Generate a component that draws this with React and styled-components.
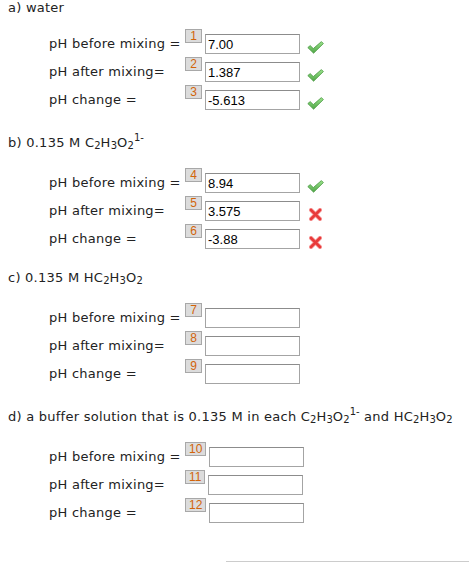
import React from 'react'
import styled, { createGlobalStyle } from 'styled-components'

const GlobalStyle = createGlobalStyle`
    html, body {
        margin: 0;
        padding: 0;
        background: #fff;
    }
    body {
        font-family: 'DejaVu Sans', Verdana, sans-serif;
        font-size: 13px;
        letter-spacing: 0.25px;
        color: #222;
    }
`

const Page = styled.div`
    display: flex;
    flex-direction: column;
    gap: 21px;
    width: 469px;
    height: 562px;
    overflow: hidden;
    padding-left: 8px;
    box-sizing: border-box;
`

const Section = styled.section`
    display: flex;
    flex-direction: column;
    gap: 18px;
`

const Heading = styled.div`
    line-height: 16px;
    white-space: nowrap;
`

const Sub = styled.span`
    font-size: 10px;
    line-height: 18px;
    letter-spacing: 0;
    vertical-align: -2px;
`

const Sup = styled.span`
    font-size: 10px;
    line-height: 14px;
    letter-spacing: 0;
    vertical-align: 6px;
`

const Rows = styled.div`
    display: flex;
    flex-direction: column;
    gap: 8px;
    padding-left: 41px;
`

const Row = styled.div`
    display: flex;
    align-items: flex-start;
    height: 20px;
`

const Label = styled.div`
    width: 136px;
    line-height: 20px;
    white-space: nowrap;
`

const Badge = styled.div`
    box-sizing: border-box;
    min-width: 17px;
    height: 14px;
    margin-top: -5px;
    padding: 0 3px;
    border: 1px solid #a8a8a8;
    background: #dcdcdc;
    color: #d2640a;
    font-family: 'Liberation Sans', Arial, sans-serif;
    font-size: 12px;
    letter-spacing: 0;
    line-height: 12px;
    text-align: center;
`

const AnswerInput = styled.input`
    box-sizing: border-box;
    width: 95px;
    height: 20px;
    margin: 0 0 0 3px;
    padding: 1px 2px 0;
    border: 1px solid #a4a4a4;
    border-top-color: #8c8c8c;
    background: #fff;
    color: #000;
    font-family: 'Liberation Sans', Arial, sans-serif;
    font-size: 13px;
    letter-spacing: 0;
    outline: none;
`

const Mark = styled.div`
    box-sizing: border-box;
    display: flex;
    align-items: center;
    justify-content: center;
    width: 17px;
    height: 20px;
    padding-top: 6px;
    margin-left: 7px;
`

const FooterRule = styled.div`
    margin-top: 17px;
    margin-left: 218px;
    height: 1px;
    background: #cccccc;
`

const CheckIcon = () => (
    <svg width="17" height="13" viewBox="0 0 17 13">
        <defs>
            <linearGradient id="chk" x1="0" y1="0" x2="0" y2="1">
                <stop offset="0" stopColor="#9be28c" />
                <stop offset="1" stopColor="#4fa646" />
            </linearGradient>
        </defs>
        <path
            d="M0.8 6.6 L3.2 4.6 L6.3 7.6 L14.4 0.6 L16.4 2.6 L6.6 12.2 Z"
            fill="url(#chk)"
            stroke="#4b9a44"
            strokeWidth="0.8"
            strokeLinejoin="round"
        />
    </svg>
)

const CrossIcon = () => (
    <svg width="13" height="13" viewBox="0 0 13 13">
        <g strokeLinecap="round">
            <path d="M2 2 L11 11 M11 2 L2 11" stroke="#f7a0a0" strokeWidth="4.2" />
            <path d="M2 2 L11 11 M11 2 L2 11" stroke="#e83b3b" strokeWidth="2.6" />
        </g>
    </svg>
)

const LABELS = ['pH before mixing =', 'pH after mixing=', 'pH change =']

const sections = [
    {
        id: 'a',
        title: <>a) water</>,
        answers: [
            { value: '7.00', mark: 'right' },
            { value: '1.387', mark: 'right' },
            { value: '-5.613', mark: 'right' },
        ],
    },
    {
        id: 'b',
        title: (
            <>
                b) 0.135 M C<Sub>2</Sub>H<Sub>3</Sub>O<Sub>2</Sub>
                <Sup>1-</Sup>
            </>
        ),
        answers: [
            { value: '8.94', mark: 'right' },
            { value: '3.575', mark: 'wrong' },
            { value: '-3.88', mark: 'wrong' },
        ],
    },
    {
        id: 'c',
        title: (
            <>
                c) 0.135 M HC<Sub>2</Sub>H<Sub>3</Sub>O<Sub>2</Sub>
            </>
        ),
        answers: [{ value: '' }, { value: '' }, { value: '' }],
    },
    {
        id: 'd',
        title: (
            <>
                d) a buffer solution that is 0.135 M in each C<Sub>2</Sub>H<Sub>3</Sub>O<Sub>2</Sub>
                <Sup>1-</Sup> and HC<Sub>2</Sub>H<Sub>3</Sub>O<Sub>2</Sub>
            </>
        ),
        answers: [{ value: '' }, { value: '' }, { value: '' }],
    },
]

const App = () => {
    let counter = 0
    return (
        <Page>
            <GlobalStyle />
            {sections.map(section => (
                <Section key={section.id}>
                    <Heading>{section.title}</Heading>
                    <Rows>
                        {section.answers.map((answer, i) => {
                            counter += 1
                            return (
                                <Row key={i}>
                                    <Label>{LABELS[i]}</Label>
                                    <Badge>{counter}</Badge>
                                    <AnswerInput type="text" defaultValue={answer.value} readOnly />
                                    {answer.mark && (
                                        <Mark>{answer.mark === 'right' ? <CheckIcon /> : <CrossIcon />}</Mark>
                                    )}
                                </Row>
                            )
                        })}
                    </Rows>
                </Section>
            ))}
            <FooterRule />
        </Page>
    )
}

export default App
